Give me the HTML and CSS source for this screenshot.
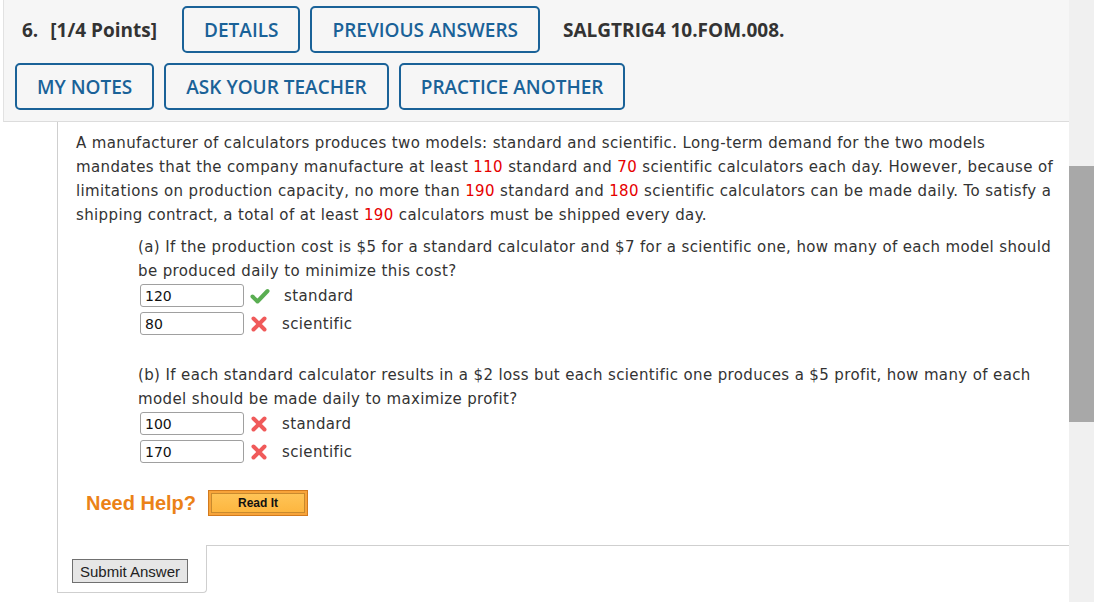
FILE: index.html
```html
<!DOCTYPE html>
<html lang="en">

<head>
    <meta charset="UTF-8">
    <link rel="stylesheet" href="styles.css">
    <title>Question 6</title>
</head>

<body>
    <div class="page">
        <div class="question-header">
            <div class="header-row">
                <span class="question-number">6.</span>
                <span class="points">[1/4 Points]</span>
                <button class="header-btn">DETAILS</button>
                <button class="header-btn">PREVIOUS ANSWERS</button>
                <span class="question-ref">SALGTRIG4 10.FOM.008.</span>
            </div>
            <div class="header-row">
                <button class="header-btn">MY NOTES</button>
                <button class="header-btn">ASK YOUR TEACHER</button>
                <button class="header-btn">PRACTICE ANOTHER</button>
            </div>
        </div>

        <div class="question">
            <div class="question-body">
                <p class="problem">
                    A manufacturer of calculators produces two models: standard and scientific. Long-term demand for the two models
                    mandates that the company manufacture at least <span class="num">110</span> standard and <span class="num">70</span> scientific calculators each day. However, because of
                    limitations on production capacity, no more than <span class="num">190</span> standard and <span class="num">180</span> scientific calculators can be made daily. To satisfy a
                    shipping contract, a total of at least <span class="num">190</span> calculators must be shipped every day.
                </p>

                <div class="part">
                    <p class="part-text">(a) If the production cost is $5 for a standard calculator and $7 for a scientific one, how many of each model should be produced daily to minimize this cost?</p>
                    <div class="answer-row">
                        <input type="text" class="answer" value="120">
                        <svg class="mark check" width="20" height="16" viewBox="0 0 20 16">
                            <path d="M2.5 8.5 L7.5 13.5 L17.5 3" fill="none" stroke="#5aae52" stroke-width="4" stroke-linecap="round" stroke-linejoin="round"/>
                        </svg>
                        <span class="unit">standard</span>
                    </div>
                    <div class="answer-row">
                        <input type="text" class="answer" value="80">
                        <svg class="mark cross" width="18" height="18" viewBox="0 0 18 18">
                            <path d="M3.5 3.5 L14.5 14.5 M14.5 3.5 L3.5 14.5" fill="none" stroke="#f05a5a" stroke-width="4" stroke-linecap="round"/>
                        </svg>
                        <span class="unit">scientific</span>
                    </div>
                </div>

                <div class="part part-b">
                    <p class="part-text">(b) If each standard calculator results in a $2 loss but each scientific one produces a $5 profit, how many of each model should be made daily to maximize profit?</p>
                    <div class="answer-row">
                        <input type="text" class="answer" value="100">
                        <svg class="mark cross" width="18" height="18" viewBox="0 0 18 18">
                            <path d="M3.5 3.5 L14.5 14.5 M14.5 3.5 L3.5 14.5" fill="none" stroke="#f05a5a" stroke-width="4" stroke-linecap="round"/>
                        </svg>
                        <span class="unit">standard</span>
                    </div>
                    <div class="answer-row">
                        <input type="text" class="answer" value="170">
                        <svg class="mark cross" width="18" height="18" viewBox="0 0 18 18">
                            <path d="M3.5 3.5 L14.5 14.5 M14.5 3.5 L3.5 14.5" fill="none" stroke="#f05a5a" stroke-width="4" stroke-linecap="round"/>
                        </svg>
                        <span class="unit">scientific</span>
                    </div>
                </div>

                <div class="need-help">
                    <span class="need-help-label">Need Help?</span>
                    <button class="read-it">Read It</button>
                </div>
            </div>

            <div class="question-footer">
                <div class="submit-cell">
                    <button class="submit-btn">Submit Answer</button>
                </div>
                <div class="footer-rest"></div>
            </div>
        </div>
    </div>

    <div class="scrollbar">
        <div class="scrollbar-thumb"></div>
    </div>
</body>

</html>
```

FILE: styles.css
```css
html,
body {
    height: 100%;
}

body {
    margin: 0;
    display: flex;
    overflow: hidden;
    background: #fff;
    font-family: "DejaVu Sans", Verdana, sans-serif;
    color: #333;
}

.page {
    flex: 1;
}

/* header with points and action buttons */
.question-header {
    margin-left: 3px;
    padding: 6px 0 11px 11px;
    background-color: #f6f6f6;
    border-left: 1px solid #e2e2e2;
    border-bottom: 1px solid #dcdcdc;
    font-family: "Open Sans", sans-serif;
    font-size: 19px;
}

.header-row {
    display: flex;
    align-items: center;
    gap: 10px;
}

.header-row + .header-row {
    margin-top: 10px;
}

.question-number {
    font-weight: 700;
    color: #333;
    margin-left: 7px;
}

.points {
    font-weight: 700;
    color: #333;
    margin-left: 2px;
    margin-right: 15px;
}

.question-ref {
    font-weight: 700;
    color: #333;
    margin-left: 13px;
}

.header-btn {
    height: 47px;
    padding: 0 20px;
    background: #f6f6f6;
    border: 2px solid #1a6298;
    border-radius: 5px;
    color: #1a6298;
    font-family: "Open Sans", sans-serif;
    font-size: 19px;
    font-weight: 600;
    cursor: pointer;
}

/* question body */
.question {
    margin-left: 57px;
    border-left: 1px solid #cfcfcf;
}

.question-body {
    padding: 9px 6px 0 18px;
    font-size: 15px;
    line-height: 24px;
    letter-spacing: 0.37px;
}

.problem {
    margin: 0;
}

.num {
    color: #e60000;
}

.part {
    margin: 8px 0 0 62px;
}

.part-b {
    margin-top: 28px;
}

.part-text {
    margin: 0 0 1px 0;
}

.answer-row {
    display: flex;
    align-items: center;
    height: 23px;
    margin-bottom: 5px;
}

.answer {
    width: 104px;
    height: 23px;
    box-sizing: border-box;
    margin: 0 0 0 2px;
    padding: 1px 4px;
    border: 1px solid #a0a0a0;
    border-radius: 3px;
    font-family: "DejaVu Sans", Verdana, sans-serif;
    font-size: 14px;
    color: #111;
}

.mark {
    margin-left: 6px;
}

.check {
    margin-right: 14px;
}

.cross {
    margin-right: 14px;
}

.unit {
    color: #333;
}

.need-help {
    display: flex;
    align-items: center;
    margin: 27px 0 0 10px;
    height: 26px;
    letter-spacing: 0;
}

.need-help-label {
    font-family: "Liberation Sans", Arial, sans-serif;
    font-size: 20px;
    font-weight: 700;
    color: #eb8217;
    margin-right: 12px;
}

.read-it {
    width: 100px;
    height: 26px;
    padding: 0;
    background: linear-gradient(#ffc65a, #fdb43c);
    border: 1px solid #d27a1e;
    box-shadow: inset 0 0 0 2px #f7a43a, inset 0 0 0 3px #c98a2e;
    font-family: "Liberation Sans", Arial, sans-serif;
    font-size: 12px;
    font-weight: 700;
    color: #111;
    cursor: pointer;
}

/* submit tab at the bottom */
.question-footer {
    display: flex;
    margin-top: 29px;
}

.submit-cell {
    width: 134px;
    padding: 14px 0 9px 14px;
    border-right: 1px solid #cfcfcf;
    border-bottom: 1px solid #cfcfcf;
    border-bottom-right-radius: 4px;
}

.submit-btn {
    height: 24px;
    padding: 0 7px;
    background-color: #e6e6e6;
    border: 1px solid #707070;
    font-family: "Liberation Sans", Arial, sans-serif;
    font-size: 15px;
    color: #222;
    white-space: nowrap;
}

.footer-rest {
    flex: 1;
    border-top: 1px solid #cfcfcf;
}

/* fake scrollbar on the right edge */
.scrollbar {
    width: 25px;
    background-color: #f0f0f0;
}

.scrollbar-thumb {
    margin-top: 166px;
    height: 256px;
    background-color: #a8a8a8;
}
```
